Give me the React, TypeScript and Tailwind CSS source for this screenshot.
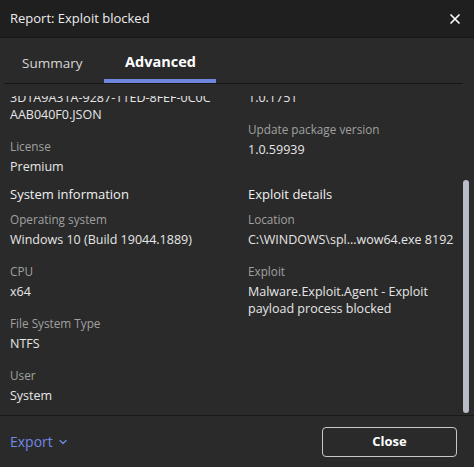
import { X, ChevronDown } from "lucide-react";

type Item = { label: string; value: string[] };

const leftTop: Item[] = [
  { label: "Exploit ID", value: ["3D1A9A31A-9287-11ED-8FEF-0C0C", "AAB040F0.JSON"] },
  { label: "License", value: ["Premium"] },
];

const rightTop: Item[] = [
  { label: "Component package version", value: ["1.0.1751"] },
  { label: "Update package version", value: ["1.0.59939"] },
];

const systemInfo: Item[] = [
  { label: "Operating system", value: ["Windows 10 (Build 19044.1889)"] },
  { label: "CPU", value: ["x64"] },
  { label: "File System Type", value: ["NTFS"] },
  { label: "User", value: ["System"] },
];

const exploitDetails: Item[] = [
  { label: "Location", value: ["C:\\WINDOWS\\spl...wow64.exe 8192"] },
  { label: "Exploit", value: ["Malware.Exploit.Agent - Exploit", "payload process blocked"] },
];

function Field({ item }: { item: Item }) {
  return (
    <div className="flex flex-col">
      <div className="text-[#a0a0a0] text-[11.75px] leading-[20px]">{item.label}</div>
      <div className="text-[#e6e6e6] leading-[17px] mt-[2px]">
        {item.value.map((v) => (
          <div key={v}>{v}</div>
        ))}
      </div>
    </div>
  );
}

function Column({ items }: { items: Item[] }) {
  return (
    <div className="flex flex-col gap-[13px]">
      {items.map((it) => (
        <Field key={it.label} item={it} />
      ))}
    </div>
  );
}

export default function App() {
  return (
    <div
      className="w-[474px] h-[467px] bg-[#2a2a2a] flex flex-col text-[12.5px] overflow-hidden"
      style={{ fontFamily: '"Open Sans", "Noto Sans", sans-serif' }}
    >
      {/* HEADER */}
      <div className="h-[38px] bg-[#1f1f1f] border-b border-[#171717] flex items-center justify-between pl-[10px] pr-[11px] shrink-0">
        <span className="text-[#ececec] text-[13px]">Report: Exploit blocked</span>
        <X className="w-[16px] h-[16px] text-white" strokeWidth={2.5} />
      </div>

      {/* TABS */}
      <div className="ml-[4px] mr-[11px] h-[46px] border-b border-[#161616] flex items-end shrink-0">
        <div className="flex h-full">
          <div className="px-[18px] flex items-center text-[13.5px] text-[#d6d6d6] pt-[5px]">Summary</div>
          <div className="w-[112px] ml-[4px] flex items-center justify-center text-[14.5px] font-bold text-white border-b-[4px] border-[#6e86de] pt-[6px]">
            Advanced
          </div>
        </div>
      </div>

      {/* CONTENT (scrolled) */}
      <div className="relative flex-1 overflow-hidden mt-[12px]">
        <div className="-mt-[29px] px-[10px] grid grid-cols-[238px_1fr]">
          <Column items={leftTop} />
          <Column items={rightTop} />
          <div className="text-[13px] text-[#f0f0f0] leading-[20px] mt-[9px] mb-[5px]">System information</div>
          <div className="text-[13px] text-[#f0f0f0] leading-[20px] mt-[9px] mb-[5px]">Exploit details</div>
          <Column items={systemInfo} />
          <Column items={exploitDetails} />
        </div>
        <div className="absolute right-[5px] top-[84px] bottom-[2px] w-[6px] rounded-full bg-[#b9bdc5]" />
      </div>

      {/* FOOTER */}
      <div className="h-[52px] border-t border-[#1a1a1a] flex items-center justify-between pl-[10px] pr-[17px] shrink-0">
        <button className="flex items-center gap-[4px] text-[#7189e3] text-[14px]">
          Export
          <ChevronDown className="w-[12px] h-[12px]" strokeWidth={2.5} />
        </button>
        <button className="w-[135px] h-[30px] rounded-[4px] border border-[#c8c8c8] text-white font-bold text-[13px]">
          Close
        </button>
      </div>
    </div>
  );
}
